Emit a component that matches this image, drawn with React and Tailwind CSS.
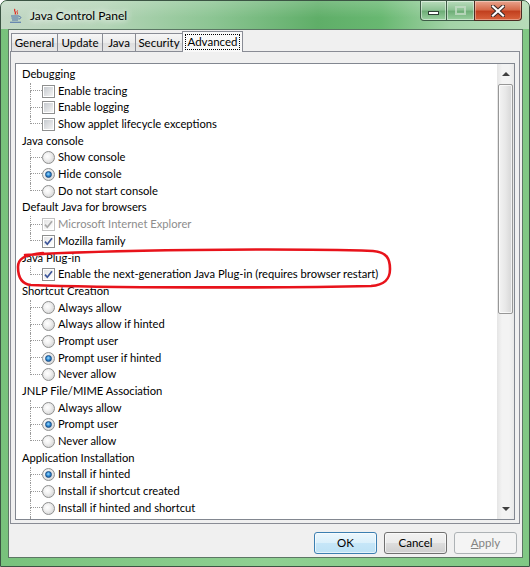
import React from 'react'

const FONT = "font-['Lato','Liberation_Sans',sans-serif]"

const GROUPS = [
  {
    label: 'Debugging',
    type: 'check',
    items: [{ text: 'Enable tracing' }, { text: 'Enable logging' }, { text: 'Show applet lifecycle exceptions' }],
  },
  {
    label: 'Java console',
    type: 'radio',
    items: [{ text: 'Show console' }, { text: 'Hide console', on: true }, { text: 'Do not start console' }],
  },
  {
    label: 'Default Java for browsers',
    type: 'check',
    items: [{ text: 'Microsoft Internet Explorer', on: true, disabled: true }, { text: 'Mozilla family', on: true }],
  },
  {
    label: 'Java Plug-in',
    type: 'check',
    items: [{ text: 'Enable the next-generation Java Plug-in (requires browser restart)', on: true }],
  },
  {
    label: 'Shortcut Creation',
    type: 'radio',
    items: [
      { text: 'Always allow' },
      { text: 'Always allow if hinted' },
      { text: 'Prompt user' },
      { text: 'Prompt user if hinted', on: true },
      { text: 'Never allow' },
    ],
  },
  {
    label: 'JNLP File/MIME Association',
    type: 'radio',
    items: [{ text: 'Always allow' }, { text: 'Prompt user', on: true }, { text: 'Never allow' }],
  },
  {
    label: 'Application Installation',
    type: 'radio',
    more: true,
    items: [
      { text: 'Install if hinted', on: true },
      { text: 'Install if shortcut created' },
      { text: 'Install if hinted and shortcut' },
    ],
  },
]

const TABS = [
  { name: 'General', w: 'w-[47px]' },
  { name: 'Update', w: 'w-[46px]' },
  { name: 'Java', w: 'w-[34px]' },
  { name: 'Security', w: 'w-[48px]' },
]

function CheckBox({ on, disabled }) {
  return (
    <span
      className={`flex h-[13px] w-[13px] shrink-0 border bg-white p-[1px] ${
        disabled ? 'border-[#c2c2c2]' : 'border-[#8e8f8f]'
      }`}
    >
      <span
        className={`flex flex-1 items-center justify-center ${
          on
            ? 'bg-[linear-gradient(135deg,#e4e4e4,#ffffff)]'
            : 'bg-[linear-gradient(135deg,#c6cacf,#f4f4f4)]'
        }`}
      >
        {on && (
          <svg width="9" height="9" viewBox="0 0 9 9">
            <path
              d="M1 4.6 L3.3 7.2 L8 1.2"
              fill="none"
              stroke={disabled ? '#a9a9a9' : '#3c5599'}
              strokeWidth="1.7"
            />
          </svg>
        )}
      </span>
    </span>
  )
}

function Radio({ on }) {
  return (
    <span className="flex h-[13px] w-[13px] shrink-0 items-center justify-center rounded-full border border-[#8e8f8f] bg-[radial-gradient(circle_at_40%_40%,#ffffff,#f2f2f2_35%,#c9c9c9)]">
      {on && (
        <span className="h-[7px] w-[7px] rounded-full border border-[#1b4e86] bg-[radial-gradient(circle_at_45%_40%,#9edcff,#2a86d0_50%,#124a8a)]" />
      )}
    </span>
  )
}

function TreeLine({ last }) {
  return (
    <span className="flex h-full w-[12px] shrink-0 flex-col">
      <span className="h-1/2 border-b border-l border-dotted border-[#9a9a9a]" />
      <span className={`h-1/2 ${last ? '' : 'border-l border-dotted border-[#9a9a9a]'}`} />
    </span>
  )
}

function Group({ group }) {
  return (
    <div>
      <div className="flex h-[16.7px] items-center pl-[6px] text-black">{group.label}</div>
      {group.items.map((item, i) => (
        <div key={i} className="flex h-[16.7px] items-center pl-[14px]">
          <TreeLine last={!group.more && i === group.items.length - 1} />
          {group.type === 'check' ? <CheckBox on={item.on} disabled={item.disabled} /> : <Radio on={item.on} />}
          <span className={`ml-[3px] whitespace-nowrap ${item.disabled ? 'text-[#8d8d8d]' : 'text-black'}`}>
            {item.text}
          </span>
        </div>
      ))}
      {group.more && (
        <div className="flex h-[16.7px] pl-[14px]">
          <span className="h-full w-[12px] border-l border-dotted border-[#9a9a9a]" />
        </div>
      )}
    </div>
  )
}

function JavaIcon() {
  return (
    <svg width="16" height="16" viewBox="0 0 16 16">
      <path d="M7 1 C5 3 9 4 7 6.5" fill="none" stroke="#e2231a" strokeWidth="1.2" />
      <path d="M9.5 2.5 C8 4 10.5 5 9 6.5" fill="none" stroke="#e2231a" strokeWidth="1" />
      <path d="M3 8 H11 M3.5 10 H10.5 M4 12 H10" stroke="#4a6ea9" strokeWidth="1.1" />
      <path d="M11 8.3 C13.5 8.3 13.5 11 10.5 11" fill="none" stroke="#4a6ea9" strokeWidth="1" />
      <path d="M2 14.2 H13" stroke="#4a6ea9" strokeWidth="1.1" />
    </svg>
  )
}

function CaptionButtons() {
  return (
    <div className="ml-auto mr-[7px] flex self-start">
      <div className="flex h-[20px] w-[27px] items-center justify-center rounded-bl-[4px] border border-t-0 border-[#3e5c47] bg-[linear-gradient(180deg,#b9dcbc,#8fc396_45%,#6fae78_55%,#9ad0a0)] shadow-[inset_0_0_0_1px_rgba(255,255,255,0.45)]">
        <span className="mt-[5px] h-[4px] w-[11px] border border-[#2d3f33] bg-white" />
      </div>
      <div className="-ml-px flex h-[20px] w-[29px] items-center justify-center border border-t-0 border-[#3e5c47] bg-[linear-gradient(180deg,#b9dcbc,#8fc396_45%,#6fae78_55%,#9ad0a0)] shadow-[inset_0_0_0_1px_rgba(255,255,255,0.45)]">
        <span className="h-[9px] w-[11px] border-[2px] border-[#c3dcc6] bg-transparent opacity-80" />
      </div>
      <div className="-ml-px flex h-[20px] w-[48px] items-center justify-center rounded-br-[4px] border border-t-0 border-[#4b2a22] bg-[linear-gradient(180deg,#e9a48e,#d66c4c_45%,#c2401f_55%,#d9633d)] shadow-[inset_0_0_0_1px_rgba(255,255,255,0.35)]">
        <svg width="14" height="12" viewBox="0 0 14 12">
          <path d="M2 1.5 L12 10.5 M12 1.5 L2 10.5" stroke="#3a2a28" strokeWidth="4.2" strokeLinecap="square" />
          <path d="M2 1.5 L12 10.5 M12 1.5 L2 10.5" stroke="#ffffff" strokeWidth="2.2" strokeLinecap="square" />
        </svg>
      </div>
    </div>
  )
}

export default function App() {
  return (
    <div
      className={`relative flex h-[567px] w-[530px] flex-col overflow-hidden rounded-t-[7px] border border-[#3b5443] bg-[linear-gradient(90deg,#78c27c,#8fd092_50%,#80c884)] text-[11.2px] ${FONT}`}
    >
      {/* title bar */}
      <div className="flex h-[28px] shrink-0 items-center bg-[linear-gradient(180deg,rgba(255,255,255,0.18),rgba(255,255,255,0)_60%),linear-gradient(90deg,#c3d8c5,#b3d4b6_20%,#8cc593_40%,#5fae68_60%,#68b871_72%,#a3d3a7_85%,#b7dcb9)]">
        <div className="ml-[7px] mt-[2px] flex items-center gap-[6px]">
          <JavaIcon />
          <span className="text-[12px] text-black [text-shadow:0_0_6px_#ffffff,0_0_10px_#ffffff]">
            Java Control Panel
          </span>
        </div>
        <CaptionButtons />
      </div>

      {/* client area */}
      <div className="ml-[7px] mr-[6px] flex h-[529px] flex-col border border-[#5c7764] bg-[#f0f0f0]">
        {/* tabs */}
        <div className="flex h-[21px] items-end pl-[2px] text-[11.5px]">
          {TABS.map((t) => (
            <div
              key={t.name}
              className={`-mr-px flex h-[18px] ${t.w} items-center justify-center border border-b-0 border-[#898c95] bg-[linear-gradient(180deg,#f6f6f6,#ebebeb_50%,#dedede_51%,#e6e6e6)] text-black`}
            >
              {t.name}
            </div>
          ))}
          <div className="relative z-10 -mb-px flex h-[21px] w-[61px] items-start justify-center border border-b-0 border-[#898c95] bg-[#f9f9f9] pt-[2px] text-black">
            <span className="border border-dotted border-black px-[2px] leading-[14px]">Advanced</span>
          </div>
        </div>

        {/* tab panel */}
        <div className="ml-px mr-[2px] flex h-[473px] flex-col border border-[#898c95] bg-[#f0f0f0] px-[4px] pb-[3px] pt-[11px]">
          <div className="flex flex-1 overflow-hidden border border-[#828790] bg-white">
            <div className="flex-1 overflow-hidden pt-[2px]">
              {GROUPS.map((g) => (
                <Group key={g.label} group={g} />
              ))}
            </div>
            {/* scrollbar */}
            <div className="flex w-[17px] shrink-0 flex-col bg-[linear-gradient(90deg,#e5e5e5,#f3f3f3_30%,#f3f3f3_70%,#e9e9e9)]">
              <div className="flex h-[20px] items-center justify-center">
                <span className="h-0 w-0 border-x-[4px] border-b-[4px] border-x-transparent border-b-[#404040]" />
              </div>
              <div className="mx-px h-[230px] rounded-[2px] border border-[#979797] bg-[linear-gradient(90deg,#f3f3f3,#e8e8e8_50%,#d6d6d6)] shadow-[inset_0_0_0_1px_rgba(255,255,255,0.7)]" />
              <div className="flex-1" />
              <div className="flex h-[20px] items-center justify-center">
                <span className="h-0 w-0 border-x-[4px] border-t-[4px] border-x-transparent border-t-[#404040]" />
              </div>
            </div>
          </div>
        </div>

        {/* buttons */}
        <div className="flex justify-end gap-[7px] pr-[5px] pt-[8px] text-[11.5px]">
          <button className="h-[22px] w-[63px] rounded-[3px] border border-[#3c7fb1] bg-[linear-gradient(180deg,#ecf7fd,#dbf0fb_50%,#c6e6f8_51%,#bde2f5)] text-black shadow-[inset_0_0_0_1px_rgba(255,255,255,0.6)]">
            OK
          </button>
          <button className="h-[22px] w-[63px] rounded-[3px] border border-[#707070] bg-[linear-gradient(180deg,#f2f2f2,#ebebeb_50%,#dddddd_51%,#cfcfcf)] text-black shadow-[inset_0_0_0_1px_rgba(255,255,255,0.6)]">
            Cancel
          </button>
          <button className="h-[22px] w-[63px] rounded-[3px] border border-[#adb2b5] bg-[#f4f4f4] text-[#838383]">
            <span className="underline">A</span>pply
          </button>
        </div>
      </div>

      {/* red annotation around the Java Plug-in group */}
      <svg className="pointer-events-none absolute left-0 top-0" width="530" height="567" viewBox="0 0 530 567">
        <path
          d="M24 254 C100 249 280 247 372 250 C386 251 389 258 389 268 C389 279 383 284 370 285 C280 287 100 287 30 284 C20 283 17 276 17 266 C17 258 22 254 42 252"
          fill="none"
          stroke="#e8131b"
          strokeWidth="2.6"
          strokeLinecap="round"
        />
      </svg>
    </div>
  )
}
